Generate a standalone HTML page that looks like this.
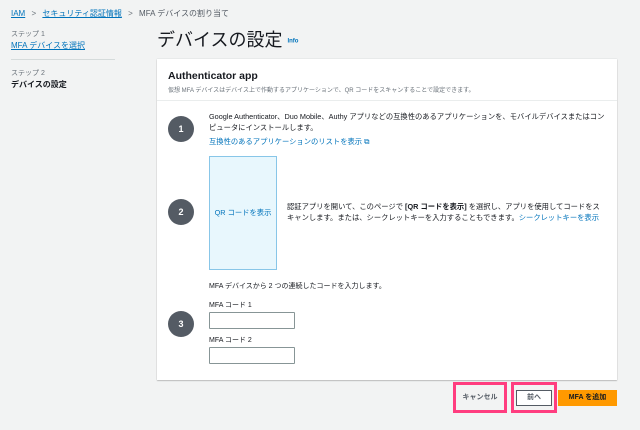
<!DOCTYPE html>
<html><head><meta charset="utf-8"><style>
*{margin:0;padding:0;box-sizing:border-box}
body{width:640px;height:430px;background:#f2f3f3;font-family:"Liberation Sans","Noto Sans CJK JP",sans-serif;color:#16191f;position:relative;overflow:hidden}
.a{position:absolute;white-space:nowrap}
.link{color:#0073bb}
.circ{position:absolute;width:26px;height:26px;border-radius:50%;background:#545b64;color:#fff;font-size:9px;font-weight:bold;text-align:center;line-height:26px;left:168px}
.inp{position:absolute;left:209px;width:86px;height:17px;border:1px solid #879596;background:#fff;border-radius:1px}
</style></head><body>
<div class="a" style="left:11px;top:8px;font-size:8px"><span class="link" style="text-decoration:underline">IAM</span> <span style="color:#687078;margin:0 4px">&gt;</span> <span class="link" style="text-decoration:underline">セキュリティ認証情報</span> <span style="color:#687078;margin:0 4px">&gt;</span> <span style="color:#545b64">MFA デバイスの割り当て</span></div>
<div class="a" style="left:11px;top:29px;font-size:7px;color:#687078">ステップ 1</div>
<div class="a link" style="left:11px;top:40px;font-size:8px;text-decoration:underline">MFA デバイスを選択</div>
<div class="a" style="left:11px;top:59px;width:104px;height:1px;background:#d5dbdb"></div>
<div class="a" style="left:11px;top:68px;font-size:7px;color:#687078">ステップ 2</div>
<div class="a" style="left:11px;top:79px;font-size:8px;font-weight:bold">デバイスの設定</div>
<div class="a" style="left:157px;top:26px;font-size:18px">デバイスの設定 <span class="link" style="font-size:6px;font-weight:bold;vertical-align:middle">Info</span></div>
<div class="a" style="left:157px;top:59px;width:460px;height:321px;background:#fff;box-shadow:0 1px 1px rgba(0,0,0,.2),0 0 1px rgba(0,0,0,.2)">
<div style="height:42px;border-bottom:1px solid #eaeded;padding:11px 0 0 11px"><div style="font-size:10.5px;font-weight:bold">Authenticator app</div><div style="font-size:6px;color:#687078;margin-top:3px">仮想 MFA デバイスはデバイス上で作動するアプリケーションで、QR コードをスキャンすることで設定できます。</div></div>
</div>
<div class="circ" style="top:116px">1</div>
<div class="circ" style="top:199px">2</div>
<div class="circ" style="top:311px">3</div>
<div class="a" style="left:209px;top:111px;font-size:7.3px;line-height:11px;white-space:normal;width:400px">Google Authenticator、Duo Mobile、Authy アプリなどの互換性のあるアプリケーションを、モバイルデバイスまたはコンピュータにインストールします。</div>
<div class="a link" style="left:209px;top:137px;font-size:7.3px">互換性のあるアプリケーションのリストを表示 ⧉</div>
<div class="a" style="left:209px;top:156px;width:68px;height:114px;background:#e8f7fd;border:1px solid #88c6e8;text-align:center;font-size:7.3px;color:#0073bb;line-height:112px">QR コードを表示</div>
<div class="a" style="left:287px;top:201px;font-size:7.3px;line-height:11px;white-space:normal;width:320px">認証アプリを開いて、このページで <b>[QR コードを表示]</b> を選択し、アプリを使用してコードをスキャンします。または、シークレットキーを入力することもできます。<span class="link">シークレットキーを表示</span></div>
<div class="a" style="left:209px;top:281px;font-size:7px">MFA デバイスから 2 つの連続したコードを入力します。</div>
<div class="a" style="left:209px;top:300px;font-size:7px">MFA コード 1</div>
<div class="inp" style="top:312px"></div>
<div class="a" style="left:209px;top:335px;font-size:7px">MFA コード 2</div>
<div class="inp" style="top:347px"></div>
<div class="a" style="left:453px;top:382px;width:54px;height:31px;border:3px solid #ff3d7f;font-size:7px;font-weight:bold;color:#545b64;text-align:center;line-height:25px">キャンセル</div>
<div class="a" style="left:511px;top:382px;width:46px;height:31px;border:3px solid #ff3d7f"></div>
<div class="a" style="left:516px;top:390px;width:36px;height:16px;border:1px solid #545b64;background:#fff;font-size:7px;font-weight:bold;color:#545b64;text-align:center;line-height:14px">前へ</div>
<div class="a" style="left:558px;top:390px;width:59px;height:16px;background:#ff9900;font-size:7px;font-weight:bold;text-align:center;line-height:16px">MFA を追加</div>
</body></html>
